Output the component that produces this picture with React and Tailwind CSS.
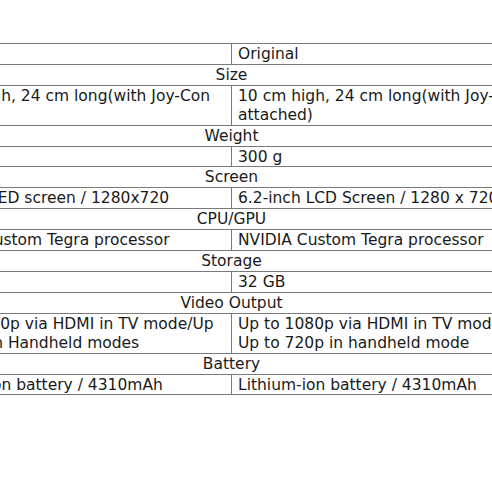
const rows = [
  { left: '', right: 'Original' },
  { head: 'Size' },
  {
    left: '10 cm high, 24 cm long(with Joy-Con attached)',
    right: '10 cm high, 24 cm long(with Joy-Con attached)',
    dark: true,
  },
  { head: 'Weight' },
  { left: '', right: '300 g' },
  { head: 'Screen' },
  { left: '7-inch OLED screen / 1280x720', right: '6.2-inch LCD Screen / 1280 x 720' },
  { head: 'CPU/GPU' },
  { left: 'NVIDIA Custom Tegra processor', right: 'NVIDIA Custom Tegra processor' },
  { head: 'Storage' },
  { left: '', right: '32 GB' },
  { head: 'Video Output' },
  {
    left: 'Up to 1080p via HDMI in TV mode/Up to 720p in Handheld modes',
    right: (
      <>
        Up to 1080p via HDMI in TV mode
        <br />
        Up to 720p in handheld mode
      </>
    ),
    dark: true,
  },
  { head: 'Battery' },
  { left: 'Lithium-ion battery / 4310mAh', right: 'Lithium-ion battery / 4310mAh' },
]

export default function App() {
  return (
    <div className="w-[492px] h-[492px] overflow-hidden bg-white pt-[43px] font-['DejaVu_Sans',Verdana,sans-serif] text-[15.5px] leading-[18.9px] text-[#1a1a1a]">
      <table className="w-[628px] ml-[-83px] border-collapse table-fixed">
        <colgroup>
          <col className="w-[314px]" />
          <col className="w-[314px]" />
        </colgroup>
        <tbody>
          {rows.map((r, i) =>
            r.head ? (
              <tr key={i}>
                <td colSpan={2} className="border border-[#7a7a7a] text-center px-[6px] pt-[1px] pb-0">
                  {r.head}
                </td>
              </tr>
            ) : (
              <tr key={i} className={r.dark ? 'border-b border-b-[#333]' : ''}>
                <td className="border border-[#7a7a7a] px-[6px] pt-[1px] pb-0 align-top">{r.left}</td>
                <td className="border border-[#7a7a7a] px-[6px] pt-[1px] pb-0 align-top">{r.right}</td>
              </tr>
            )
          )}
        </tbody>
      </table>
    </div>
  )
}
